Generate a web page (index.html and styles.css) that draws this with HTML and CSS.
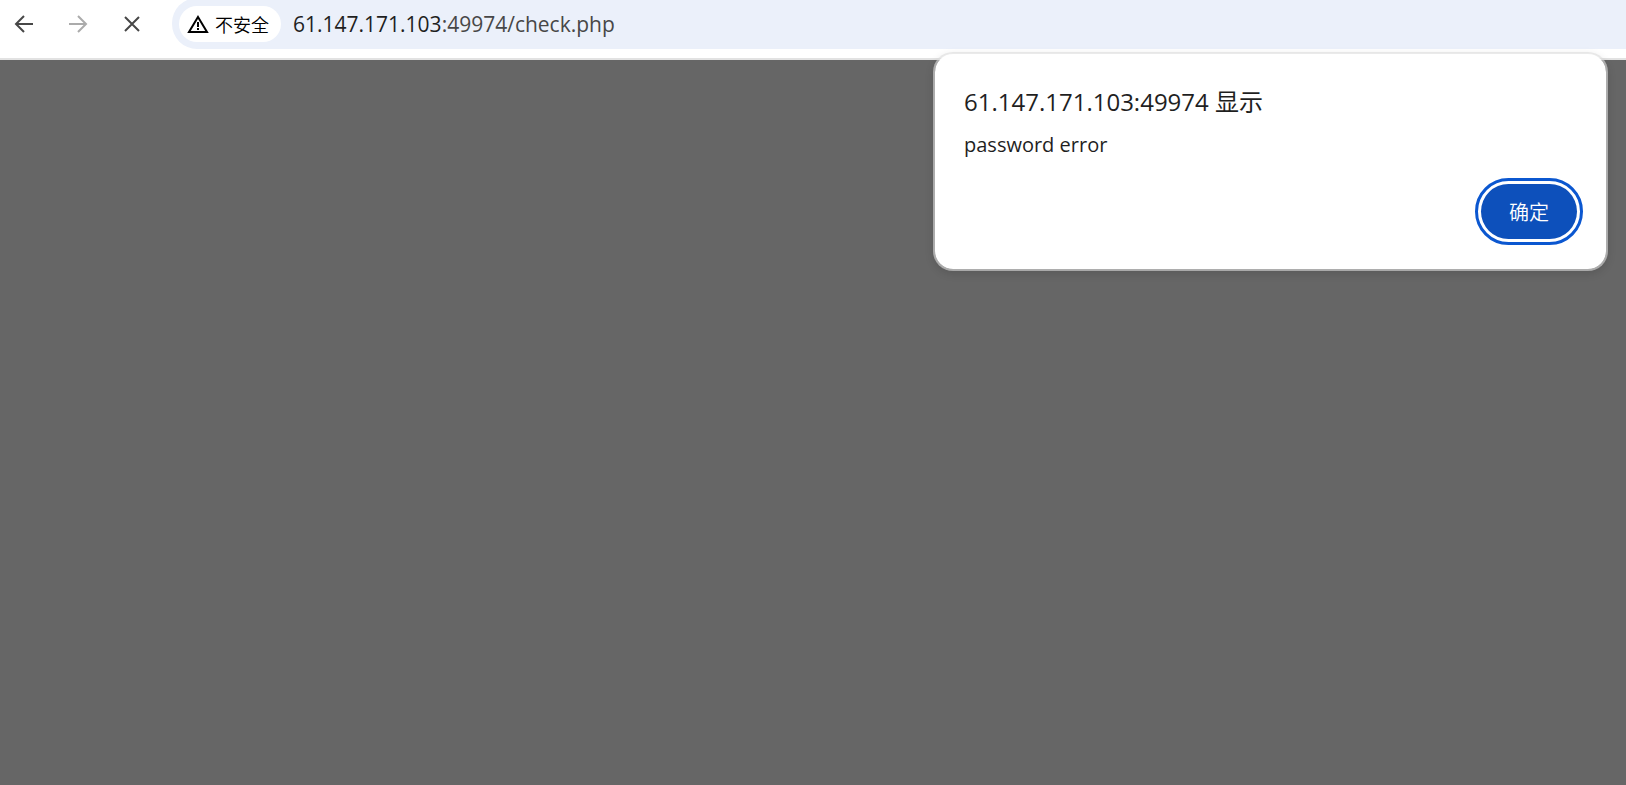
FILE: index.html
```html
<!DOCTYPE html>
<html lang="zh-CN">
  <head>
    <meta charset="utf-8">
    <title>61.147.171.103:49974/check.php</title>
    <link rel="stylesheet" href="styles.css">
  </head>
  <body>
    <header class="toolbar">
      <nav class="nav">
        <button type="button" class="nav-button" aria-label="返回">
          <svg viewBox="0 0 20 20"><path d="M19 10H2M10 2L2 10l8 8"/></svg>
        </button>
        <button type="button" class="nav-button" aria-label="前进" disabled>
          <svg viewBox="0 0 20 20"><path d="M1 10h17M10 2l8 8-8 8"/></svg>
        </button>
        <button type="button" class="nav-button" aria-label="停止">
          <svg viewBox="0 0 20 20"><path d="M3 3l14 14M17 3L3 17"/></svg>
        </button>
      </nav>
      <div class="address">
        <button type="button" class="security">
          <svg class="warning" viewBox="0 0 22 20">
            <path d="M11 3L20 18H2z"/>
            <path d="M11 8v5M11 14v2"/>
          </svg>
          不安全
        </button>
        <a class="url" href="#"><span class="host">61.147.171.103</span>:49974/check.php</a>
      </div>
    </header>
    <main class="page"></main>
    <div class="dialog" role="alertdialog" aria-labelledby="title" aria-describedby="message">
      <h1 class="title" id="title">61.147.171.103:49974 显示</h1>
      <p class="message" id="message">password error</p>
      <div class="actions">
        <button type="button" class="confirm">确定</button>
      </div>
    </div>
  </body>
</html>
```

FILE: styles.css
```css
*{
    box-sizing: border-box;
}
body{
    display: flex;
    flex-direction: column;
    min-height: 100vh;
    margin: 0;
    background: white;
    color: #1f1f1f;
    font-family: "Open Sans", "Noto Sans CJK SC", sans-serif;
}
button{
    border: 0;
    font-family: inherit;
}
.toolbar{
    display: flex;
    height: 60px;
    padding-bottom: 9px;
    border-bottom: 2px solid #e2e2e2;
}
.nav{
    display: flex;
    align-items: center;
    gap: 18px;
    padding: 0 22px 2px 6px;
}
.nav-button{
    display: flex;
    justify-content: center;
    width: 36px;
    padding: 0;
    background: none;
    color: #474747;
}
.nav-button:disabled{
    color: #ababab;
}
svg{
    width: 20px;
    height: 20px;
    fill: none;
    stroke: currentColor;
    stroke-width: 2;
}
.address{
    display: flex;
    flex: 1;
    align-items: center;
    gap: 12px;
    margin-top: -2px;
    padding: 0 7px;
    border-radius: 25px 0 0 25px;
    background: #ebf0fa;
}
.security{
    display: flex;
    align-items: center;
    gap: 6px;
    height: 36px;
    padding: 0 12px 0 8px;
    border-radius: 18px;
    background: white;
    color: black;
    font-size: 18px;
    font-weight: 350;
}
.warning{
    width: 22px;
}
.url{
    color: #474747;
    font-size: 21px;
    line-height: 28px;
    text-decoration: none;
}
.host{
    color: #1f1f1f;
}
.page{
    flex: 1;
    background: #666;
}
/* sits over the page and the lower edge of the toolbar */
.dialog{
    position: absolute;
    top: 52px;
    right: 18px;
    width: 675px;
    padding: 30px 29px;
    border: 2px solid rgba(220, 220, 220, 0.6);
    border-radius: 20px;
    background: white;
    background-clip: padding-box;
    box-shadow: 0 3px 8px rgba(0, 0, 0, 0.12);
}
.title{
    margin: 0;
    font-size: 24px;
    font-weight: 400;
    line-height: 36px;
}
.message{
    margin: 10px 0 24px;
    font-size: 20px;
    line-height: 30px;
}
.actions{
    display: flex;
    justify-content: flex-end;
}
.confirm{
    height: 55px;
    padding: 0 28px;
    border-radius: 28px;
    outline: 3px solid #0b57d0;
    outline-offset: 3px;
    background: #0d50bb;
    color: white;
    font-size: 20px;
    font-weight: 350;
}
```
